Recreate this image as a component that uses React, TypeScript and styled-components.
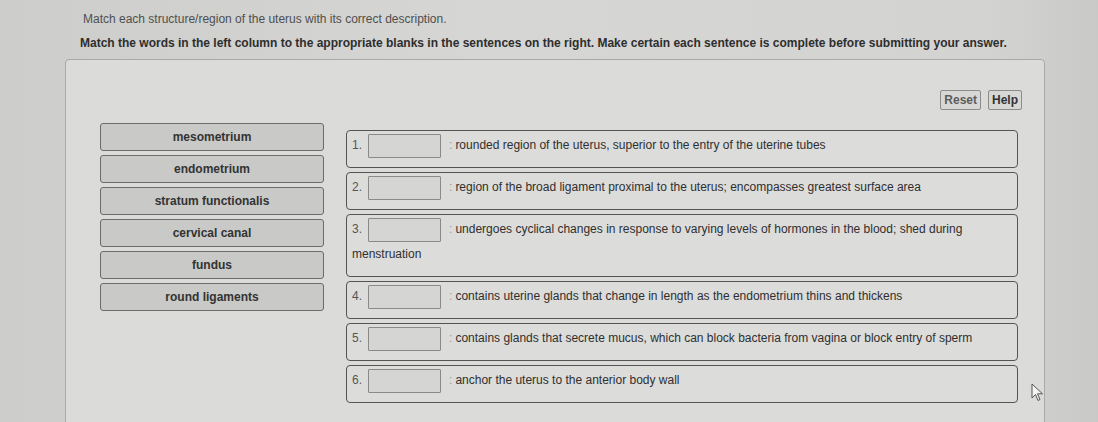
import React from "react";
import styled, { createGlobalStyle } from "styled-components";

const Global = createGlobalStyle`
  html, body {
    margin: 0;
    background: #d1d1cf;
    font-family: "Liberation Sans", Arial, sans-serif;
  }
`;

const Page = styled.div`
  position: relative;
  width: 1098px;
  height: 422px;
  overflow: hidden;
  padding: 12px 0 0 65px;
  box-sizing: border-box;
  background: linear-gradient(90deg, #cdcdcb 0%, #d6d6d4 45%, #d3d3d1 90%, #c9c9c7 100%);
`;

const Title = styled.div`
  padding-left: 18px;
  font-size: 12px;
  color: #4f4f4f;
  line-height: 15px;
`;

const Instruction = styled.div`
  padding-left: 15px;
  margin-top: 9px;
  font-size: 12px;
  font-weight: bold;
  color: #2e2e2e;
  line-height: 15px;
`;

const Panel = styled.div`
  margin-top: 8px;
  width: 980px;
  height: 380px;
  border: 1px solid #a9a9a7;
  border-radius: 4px;
  background: #dbdbd9;
  box-sizing: border-box;
  padding: 30px 22px 0 34px;
`;

const Toolbar = styled.div`
  display: flex;
  justify-content: flex-end;
  gap: 7px;
`;

const ToolButton = styled.button<{ dark?: boolean }>`
  height: 20px;
  padding: 0 3px;
  font-family: "Liberation Sans", Arial, sans-serif;
  font-size: 12px;
  font-weight: bold;
  color: ${(p) => (p.dark ? "#333" : "#5d5d5d")};
  background: #d7d7d5;
  border: 1px solid #8c8c8a;
  border-radius: 2px;
`;

const Body = styled.div`
  display: flex;
  align-items: flex-start;
  margin-top: 13px;
`;

const WordColumn = styled.div`
  display: flex;
  flex-direction: column;
  gap: 4px;
  width: 224px;
`;

const Word = styled.div`
  height: 28px;
  box-sizing: border-box;
  display: flex;
  align-items: center;
  justify-content: center;
  background: #c9c9c7;
  border: 1px solid #6c6c6a;
  border-radius: 3px;
  font-size: 12px;
  font-weight: bold;
  color: #333;
`;

const SentenceColumn = styled.div`
  display: flex;
  flex-direction: column;
  gap: 4px;
  width: 672px;
  margin-left: 22px;
  margin-top: 7px;
`;

const Sentence = styled.div`
  border: 1px solid #545452;
  border-radius: 4px;
  background: #dcdcda;
  padding: 2px 5px 9px 5px;
  font-size: 12px;
  line-height: 25px;
  color: #2f2f2f;
`;

const Num = styled.span`
  color: #555;
  margin-right: 6px;
`;

const Blank = styled.span`
  display: inline-block;
  width: 73px;
  height: 24px;
  vertical-align: middle;
  border: 1px solid #8a8a88;
  border-radius: 1px;
  background: #d5d5d3;
  box-sizing: border-box;
  margin-right: 8px;
`;

const Colon = styled.span`
  color: #9a9a98;
  margin-right: 3px;
`;

const Cursor = styled.svg`
  position: absolute;
  left: 1031px;
  top: 383px;
`;

const words = [
  "mesometrium",
  "endometrium",
  "stratum functionalis",
  "cervical canal",
  "fundus",
  "round ligaments",
];

const sentences = [
  "rounded region of the uterus, superior to the entry of the uterine tubes",
  "region of the broad ligament proximal to the uterus; encompasses greatest surface area",
  "undergoes cyclical changes in response to varying levels of hormones in the blood; shed during menstruation",
  "contains uterine glands that change in length as the endometrium thins and thickens",
  "contains glands that secrete mucus, which can block bacteria from vagina or block entry of sperm",
  "anchor the uterus to the anterior body wall",
];

function App() {
  return (
    <Page>
      <Global />
      <Title>Match each structure/region of the uterus with its correct description.</Title>
      <Instruction>
        Match the words in the left column to the appropriate blanks in the sentences on the right. Make certain each
        sentence is complete before submitting your answer.
      </Instruction>
      <Panel>
        <Toolbar>
          <ToolButton>Reset</ToolButton>
          <ToolButton dark>Help</ToolButton>
        </Toolbar>
        <Body>
          <WordColumn>
            {words.map((w) => (
              <Word key={w}>{w}</Word>
            ))}
          </WordColumn>
          <SentenceColumn>
            {sentences.map((s, i) => (
              <Sentence key={i}>
                <Num>{i + 1}.</Num>
                <Blank />
                <Colon>:</Colon>
                {s}
              </Sentence>
            ))}
          </SentenceColumn>
        </Body>
      </Panel>
      <Cursor width="14" height="20" viewBox="0 0 14 20">
        <path d="M1 1 L1 15 L4.5 11.5 L7 17.5 L9 16.5 L6.5 10.8 L11.5 10.8 Z" fill="#f4f4f2" stroke="#555" strokeWidth="1" />
      </Cursor>
    </Page>
  );
}

export default App;
